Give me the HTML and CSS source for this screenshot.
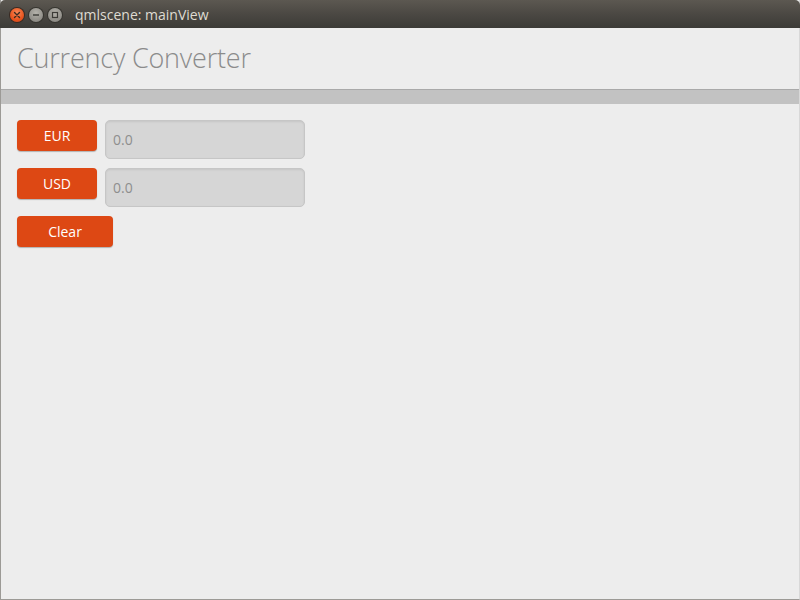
FILE: index.html
```html
<!DOCTYPE html>
<html lang="en">
<head>
<meta charset="utf-8"/>
<meta content="width=device-width, initial-scale=1.0" name="viewport"/>
<title>qmlscene: mainView</title>
<link rel="stylesheet" href="styles.css">
</head>
<body>
<div class="window">
<div class="titlebar">
<div class="wm-buttons">
<span class="wm-btn wm-close">
<svg width="8" height="8" viewBox="0 0 8 8"><path d="M1.5 1.5 L6.5 6.5 M6.5 1.5 L1.5 6.5" stroke="#3c2a20" stroke-width="1.4" stroke-linecap="round"/></svg>
</span>
<span class="wm-btn wm-min">
<svg width="8" height="8" viewBox="0 0 8 8"><path d="M1 4 H7" stroke="#3c3b37" stroke-width="1.4"/></svg>
</span>
<span class="wm-btn wm-max">
<svg width="8" height="8" viewBox="0 0 8 8"><rect x="1.5" y="1.5" width="5" height="5" fill="none" stroke="#3c3b37" stroke-width="1.2"/></svg>
</span>
</div>
<div class="window-title">qmlscene: mainView</div>
</div>
<div class="header">
<h1>Currency Converter</h1>
</div>
<div class="divider"></div>
<div class="content">
<div class="row">
<button class="btn btn-currency">EUR</button>
<input class="field" type="text" placeholder="0.0"/>
</div>
<div class="row">
<button class="btn btn-currency">USD</button>
<input class="field" type="text" placeholder="0.0"/>
</div>
<div class="row">
<button class="btn btn-clear">Clear</button>
</div>
</div>
</div>
</body>
</html>
```

FILE: styles.css
```css
* {
    margin: 0;
    padding: 0;
    box-sizing: border-box;
}

body {
    font-family: 'Open Sans', 'DejaVu Sans', sans-serif;
    background: #ededed;
    width: 800px;
    height: 600px;
    overflow: hidden;
}

.window {
    width: 800px;
    height: 600px;
    display: flex;
    flex-direction: column;
    background: #ededed;
    border-left: 1px solid #9c9a96;
    border-bottom: 1px solid #9c9a96;
    border-right: 1px solid #d8d8d8;
}

.titlebar {
    height: 28px;
    flex-shrink: 0;
    display: flex;
    align-items: center;
    background: linear-gradient(180deg, #5c5851 0%, #4b4843 50%, #3c3b37 100%);
    border-radius: 5px 5px 0 0;
    margin-left: -1px;
    margin-right: -1px;
    padding-left: 10px;
    padding-top: 2px;
}

.wm-buttons {
    display: flex;
    gap: 5px;
}

.wm-btn {
    width: 14px;
    height: 14px;
    border-radius: 50%;
    display: flex;
    align-items: center;
    justify-content: center;
}

.wm-close {
    background: radial-gradient(circle at 50% 35%, #f58a5b 0%, #e9541d 60%, #c8401a 100%);
    box-shadow: 0 0 0 1px #3a2a22;
}

.wm-min, .wm-max {
    background: radial-gradient(circle at 50% 35%, #b4b2ab 0%, #8f8d87 70%, #7a7873 100%);
    box-shadow: 0 0 0 1px #35342f;
}

.window-title {
    margin-left: 13px;
    margin-top: -2px;
    color: #dfdbd2;
    font-size: 14px;
    font-family: 'Open Sans', 'DejaVu Sans', sans-serif;
}

.header {
    height: 61px;
    flex-shrink: 0;
    padding-left: 16px;
    padding-top: 12px;
}

h1 {
    font-weight: 300;
    font-size: 27px;
    color: #8b8b8b;
    line-height: 36px;
    letter-spacing: -0.2px;
}

.divider {
    height: 15px;
    flex-shrink: 0;
    background: #c2c2c2;
    border-top: 1px solid #a9a9a9;
}

.content {
    padding: 16px 16px;
    display: flex;
    flex-direction: column;
    gap: 9px;
}

.row {
    display: flex;
    align-items: flex-start;
    gap: 8px;
}

.btn {
    height: 31px;
    border: none;
    border-radius: 4px;
    background: #dd4814;
    color: #ffffff;
    font-family: 'Open Sans', 'DejaVu Sans', sans-serif;
    font-size: 14px;
    box-shadow: 0 1px 1px rgba(0, 0, 0, 0.25);
    cursor: pointer;
}

.btn-currency {
    width: 80px;
}

.btn-clear {
    width: 96px;
}

.field {
    width: 200px;
    height: 39px;
    border: 1px solid #c6c6c6;
    border-radius: 5px;
    background: #d6d6d6;
    padding: 0 7px;
    font-family: 'Open Sans', 'DejaVu Sans', sans-serif;
    font-size: 14px;
    color: #7a7a7a;
    outline: none;
    box-shadow: inset 0 1px 2px rgba(0, 0, 0, 0.08);
}

.field::placeholder {
    color: #8e8e8e;
}
```
